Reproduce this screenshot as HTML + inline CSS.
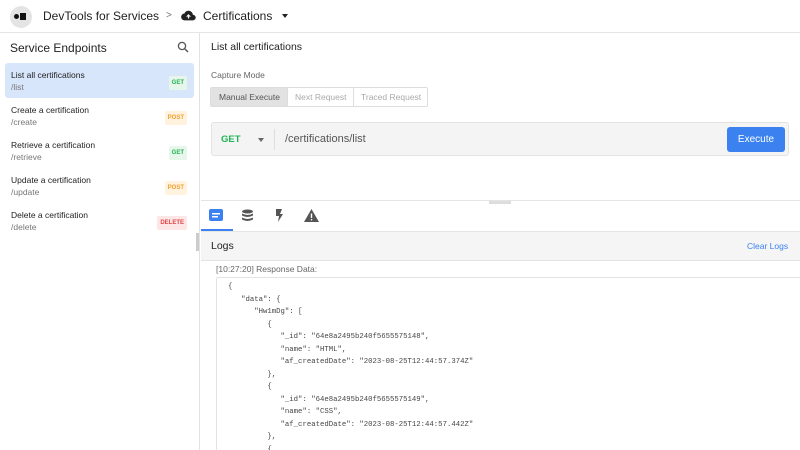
<!DOCTYPE html><html><head><meta charset="utf-8"><style>
*{box-sizing:border-box;margin:0;padding:0}
html,body{width:800px;height:450px;overflow:hidden}
body{font-family:"Liberation Sans",sans-serif;background:#fff;color:#222;position:relative}
.abs{position:absolute}
.hdr{left:0;top:0;width:800px;height:33px;border-bottom:1px solid #e6e6e6}
.side{left:0;top:33px;width:200px;height:417px;border-right:1px solid #e2e2e2}
.item{position:absolute;left:5px;width:189px;height:35px;border-radius:3px;padding:6px 0 0 6px;font-size:8.5px;color:#222;line-height:12px}
.item .p{color:#777}
.badge{position:absolute;right:7px;top:13px;font-size:6px;font-weight:bold;padding:1px 3px;border-radius:2px}
.g{color:#22b455;background:#e6f6ea}.po{color:#f0a030;background:#fff3df}.d{color:#e04545;background:#fde6e6}
.mono{font-family:"Liberation Mono",monospace;font-size:7.3px;color:#444;line-height:12.5px;white-space:pre}
</style></head><body>
<div class="abs hdr">
 <div class="abs" style="left:10px;top:6px;width:22px;height:22px;border-radius:50%;background:#e4e4e4"></div>
 <div class="abs" style="left:14px;top:14px;width:5px;height:5px;border-radius:50%;background:#111"></div>
 <div class="abs" style="left:20px;top:13px;width:6px;height:7px;background:#111"></div>
 <div class="abs" style="left:43px;top:9px;font-size:12px;color:#222">DevTools for Services</div>
 <div class="abs" style="left:166px;top:10px;font-size:10px;color:#777">&gt;</div>
 <svg class="abs" style="left:181px;top:10px" width="15" height="12" viewBox="0 0 24 18"><path d="M19 7A7 7 0 0 0 5.5 5 5.5 5.5 0 0 0 6 16h13a4.5 4.5 0 0 0 0-9z" fill="#222"/><path d="M12 6l-4 4h3v3h2v-3h3z" fill="#fff"/></svg>
 <div class="abs" style="left:203px;top:9px;font-size:12px;color:#222">Certifications</div>
 <div class="abs" style="left:282px;top:14px;border:3.5px solid transparent;border-top:4px solid #222"></div>
</div>
<div class="abs side">
 <div class="abs" style="left:10px;top:8px;font-size:12px;color:#222">Service Endpoints</div>
 <svg class="abs" style="left:177px;top:8px" width="12" height="12" viewBox="0 0 12 12"><circle cx="5" cy="5" r="3.6" fill="none" stroke="#555" stroke-width="1.3"/><path d="M7.6 7.6L11 11" stroke="#555" stroke-width="1.4"/></svg>
 <div class="item" style="top:30px;background:#d8e6fb">List all certifications<br><span class="p">/list</span><span class="badge g">GET</span></div>
 <div class="item" style="top:65px">Create a certification<br><span class="p">/create</span><span class="badge po">POST</span></div>
 <div class="item" style="top:100px">Retrieve a certification<br><span class="p">/retrieve</span><span class="badge g">GET</span></div>
 <div class="item" style="top:135px">Update a certification<br><span class="p">/update</span><span class="badge po">POST</span></div>
 <div class="item" style="top:170px">Delete a certification<br><span class="p">/delete</span><span class="badge d">DELETE</span></div>
 <div class="abs" style="left:196px;top:200px;width:3px;height:18px;background:#ccc"></div>
</div>
<div class="abs" style="left:211px;top:41px;font-size:10.5px;color:#222">List all certifications</div>
<div class="abs" style="left:211px;top:70px;font-size:8.5px;color:#666">Capture Mode</div>
<div class="abs" style="left:210px;top:87px;width:218px;height:20px;border:1px solid #ddd;border-radius:2px;font-size:8.5px;color:#aaa">
 <div class="abs" style="left:0;top:0;width:76px;height:18px;background:#e2e2e2;color:#555;padding:4px 0 0 8px">Manual Execute</div>
 <div class="abs" style="left:76px;top:0;width:66px;height:18px;border-left:1px solid #ddd;padding:4px 0 0 7px">Next Request</div>
 <div class="abs" style="left:142px;top:0;width:74px;height:18px;border-left:1px solid #ddd;padding:4px 0 0 7px">Traced Request</div>
</div>
<div class="abs" style="left:211px;top:122px;width:578px;height:34px;background:#f4f4f4;border:1px solid #e3e3e3;border-radius:3px">
 <div class="abs" style="left:9px;top:11px;font-size:9.5px;font-weight:bold;color:#22b455">GET</div>
 <div class="abs" style="left:46px;top:15px;border:3.5px solid transparent;border-top:4px solid #666"></div>
 <div class="abs" style="left:62px;top:6px;width:1px;height:21px;background:#ddd"></div>
 <div class="abs" style="left:73px;top:10px;font-size:11px;color:#555">/certifications/list</div>
 <div class="abs" style="left:515px;top:4px;width:58px;height:25px;background:#3b82f0;border-radius:3px;color:#fff;font-size:10px;text-align:center;line-height:25px">Execute</div>
</div>
<div class="abs" style="left:201px;top:200px;width:599px;height:1px;background:#e4e4e4"></div>
<div class="abs" style="left:489px;top:201px;width:22px;height:3px;background:#ddd"></div>
<svg class="abs" style="left:209px;top:209px" width="14" height="12"><rect x="0" y="0" width="14" height="12" rx="2" fill="#3b82f0"/><rect x="3" y="4" width="8" height="1.5" fill="#fff"/><rect x="3" y="7" width="6" height="1.5" fill="#fff"/></svg>
<svg class="abs" style="left:241px;top:209px" width="13" height="13" viewBox="0 0 13 13"><ellipse cx="6.5" cy="2.5" rx="5.5" ry="2" fill="#555"/><path d="M1 4.5q5.5 3 11 0v2q-5.5 3-11 0zM1 8.5q5.5 3 11 0v2q-5.5 3-11 0z" fill="#555"/></svg>
<svg class="abs" style="left:275px;top:209px" width="9" height="13" viewBox="0 0 9 13"><path d="M1 0h6L5 5h3L3 13l1-6H1z" fill="#555"/></svg>
<svg class="abs" style="left:304px;top:209px" width="15" height="13" viewBox="0 0 15 13"><path d="M7.5 0L15 13H0z" fill="#555"/><rect x="6.8" y="4.5" width="1.4" height="4.5" fill="#fff"/><rect x="6.8" y="10" width="1.4" height="1.4" fill="#fff"/></svg>
<div class="abs" style="left:201px;top:229px;width:32px;height:2px;background:#3b82f0"></div>
<div class="abs" style="left:201px;top:231px;width:599px;height:30px;background:#f5f5f5;border-top:1px solid #e6e6e6;border-bottom:1px solid #e3e3e3"></div>
<div class="abs" style="left:211px;top:240px;font-size:10.5px;color:#222">Logs</div>
<div class="abs" style="left:747px;top:241px;font-size:8.5px;color:#3b82f0">Clear Logs</div>
<div class="abs" style="left:216px;top:264px;font-size:8.5px;color:#666">[10:27:20] Response Data:</div>
<div class="abs" style="left:216px;top:277px;width:584px;height:173px;border:1px solid #e3e3e3;border-bottom:none;border-right:none;border-radius:2px 0 0 0;overflow:hidden">
<div class="abs mono" style="left:11px;top:3px">{
   "data": {
      "Hw1mDg": [
         {
            "_id": "64e8a2495b240f5655575148",
            "name": "HTML",
            "af_createdDate": "2023-08-25T12:44:57.374Z"
         },
         {
            "_id": "64e8a2495b240f5655575149",
            "name": "CSS",
            "af_createdDate": "2023-08-25T12:44:57.442Z"
         },
         {
            "_id": "64e8a2495b240f565557514a",
            "name": "JavaScript",
            "af_createdDate": "2023-08-25T12:44:57.508Z"
         },
         {
            "_id": "64e8a2495b240f565557514b",</div></div>
</body></html>
